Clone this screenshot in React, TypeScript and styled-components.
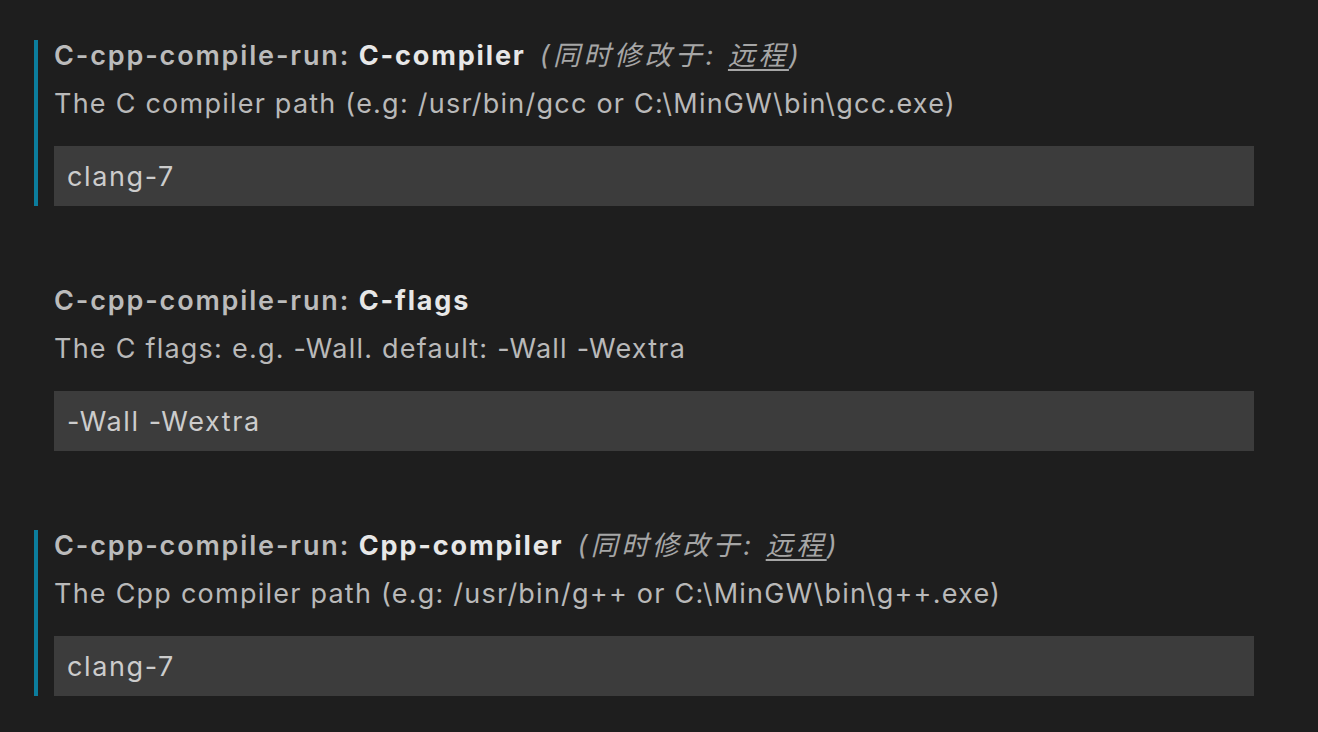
import styled, { createGlobalStyle } from "styled-components";

type Setting = {
  category: string;
  label: string;
  alsoIn?: string;
  description: string;
  value: string;
  modified: boolean;
};

const settings: Setting[] = [
  {
    category: "C-cpp-compile-run: ",
    label: "C-compiler",
    alsoIn: "远程",
    description: "The C compiler path (e.g: /usr/bin/gcc or C:\\MinGW\\bin\\gcc.exe)",
    value: "clang-7",
    modified: true,
  },
  {
    category: "C-cpp-compile-run: ",
    label: "C-flags",
    description: "The C flags: e.g. -Wall. default: -Wall -Wextra",
    value: "-Wall -Wextra",
    modified: false,
  },
  {
    category: "C-cpp-compile-run: ",
    label: "Cpp-compiler",
    alsoIn: "远程",
    description: "The Cpp compiler path (e.g: /usr/bin/g++ or C:\\MinGW\\bin\\g++.exe)",
    value: "clang-7",
    modified: true,
  },
];

export default function App() {
  return (
    <>
      <GlobalStyle />
      <Page>
        {settings.map((s, i) => (
          <Item key={i} modified={s.modified}>
            <Title>
              <Category>{s.category}</Category>
              <Label>{s.label}</Label>
              {s.alsoIn && (
                <AlsoIn>
                  (同时修改于: <Link>{s.alsoIn}</Link>)
                </AlsoIn>
              )}
            </Title>
            <Description>{s.description}</Description>
            <Input type="text" defaultValue={s.value} spellCheck={false} />
          </Item>
        ))}
      </Page>
    </>
  );
}

const GlobalStyle = createGlobalStyle`
  html, body {
    margin: 0;
    padding: 0;
    background: #1e1e1e;
  }
  body {
    font-family: Inter, "Noto Sans", "Noto Sans CJK SC", sans-serif;
    color: #cccccc;
  }
`;

const Page = styled.div`
  display: flex;
  flex-direction: column;
  gap: 79px;
  padding: 40px 0 0 34px;
  min-height: 100vh;
  box-sizing: border-box;
`;

const Item = styled.div.withConfig({
  shouldForwardProp: (prop) => prop !== "modified",
})<{ modified?: boolean }>`
  display: flex;
  flex-direction: column;
  border-left: 4px solid ${({ modified }) => (modified ? "#0c7d9d" : "transparent")};
  padding-left: 16px;
  width: 1200px;
`;

const Title = styled.div`
  font-size: 27px;
  line-height: 32px;
  white-space: nowrap;
  letter-spacing: 1.85px;
`;

const Category = styled.span`
  font-weight: 600;
  color: #bbbbbb;
`;

const Label = styled.span`
  font-weight: 700;
  color: #e7e7e7;
`;

const AlsoIn = styled.span`
  margin-left: 14px;
  font-style: italic;
  font-weight: 400;
  color: #a6a6a6;
  letter-spacing: 3.5px;
  font-family: Inter, "Noto Sans CJK SC", sans-serif;
`;

const Link = styled.span`
  text-decoration: underline;
  text-underline-offset: 4px;
`;

const Description = styled.div`
  margin-top: 14px;
  font-size: 27px;
  line-height: 36px;
  color: #b9b9b9;
  white-space: nowrap;
  letter-spacing: 1.23px;
`;

const Input = styled.input`
  margin-top: 24px;
  height: 60px;
  box-sizing: border-box;
  width: 100%;
  border: none;
  outline: none;
  background: #3c3c3c;
  color: #cccccc;
  padding: 0 13px;
  font-family: inherit;
  font-size: 27px;
  letter-spacing: 1.6px;
`;
